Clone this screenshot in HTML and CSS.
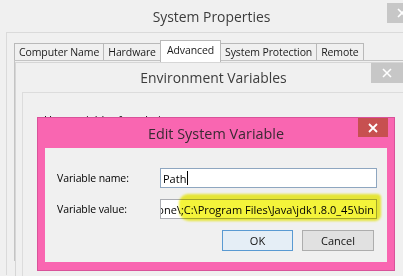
FILE: index.html
```html
<!DOCTYPE html>
<html lang="en">
<head>
  <meta charset="UTF-8" />
  <title>Edit System Variable</title>
  <link rel="stylesheet" href="styles.css">
</head>
<body>
  <div class="janela sistema">
    <div class="barra">
      <div class="titulo">System Properties</div>
      <div class="fechar cinza sys-fechar">
        <svg width="10" height="10" viewBox="0 0 10 10"><path d="M1 1L9 9M9 1L1 9" stroke="#fff" stroke-width="1.6"/></svg>
      </div>
    </div>
    <div class="cliente">
      <div class="abas">
        <div class="aba">Computer Name</div>
        <div class="aba">Hardware</div>
        <div class="aba ativa">Advanced</div>
        <div class="aba">System Protection</div>
        <div class="aba">Remote</div>
      </div>
      <div class="painel"></div>
    </div>
  </div>

  <div class="janela ambiente">
    <div class="barra">
      <div class="titulo">Environment Variables</div>
      <div class="fechar cinza">
        <svg width="10" height="10" viewBox="0 0 10 10"><path d="M1 1L9 9M9 1L1 9" stroke="#fff" stroke-width="1.6"/></svg>
      </div>
    </div>
    <div class="cliente">
      <div class="rotulo-grupo">User variables for admin</div>
    </div>
  </div>

  <div class="janela editar">
    <div class="barra">
      <div class="titulo">Edit System Variable</div>
      <div class="fechar vermelho">
        <svg width="10" height="10" viewBox="0 0 10 10"><path d="M1 1L9 9M9 1L1 9" stroke="#fff" stroke-width="1.8"/></svg>
      </div>
    </div>
    <div class="cliente">
      <div class="linha">
        <label>Variable name:</label>
        <div class="campo foco"><span>Path</span><i class="cursor"></i></div>
      </div>
      <div class="linha">
        <label>Variable value:</label>
        <div class="campo"><span>one\;C:\Program Files\Java\jdk1.8.0_45\bin</span></div>
      </div>
      <div class="botoes">
        <button class="btn padrao">OK</button>
        <button class="btn">Cancel</button>
      </div>
    </div>
    <div class="marca"></div>
  </div>
</body>
</html>
```

FILE: styles.css
```css
body {
  margin: 0;
  width: 403px;
  height: 276px;
  overflow: hidden;
  background-color: #f0f0f0;
  font-family: "Open Sans", "Noto Sans", sans-serif;
  font-size: 10.5px;
  letter-spacing: -0.1px;
  color: #000;
  position: relative;
}

.janela .barra {
  position: relative;
  display: flex;
  align-items: center;
  justify-content: center;
}

.fechar {
  position: absolute;
  display: flex;
  align-items: center;
  justify-content: center;
}

.cinza {
  background-color: #c7c7c7;
}

.vermelho {
  background-color: #c75050;
}

/* janela de tras */
.sistema .barra {
  height: 32px;
  padding-left: 20px;
}

.sistema .titulo {
  font-size: 13.9px;
  letter-spacing: 0;
  color: #3c3c3c;
}

.sys-fechar {
  top: 3px;
  right: -13px;
  width: 29px;
  height: 20px;
}

.sistema .cliente {
  margin-left: 6px;
  height: 242px;
  border-top: 1px solid #dadada;
  border-left: 1px solid #dadada;
  padding-left: 7px;
}

.abas {
  display: flex;
  margin-top: 10px;
  height: 17px;
}

.aba {
  padding: 0 4px;
  border: 1px solid #b9b9b9;
  border-bottom: none;
  border-right: none;
  line-height: 16px;
  background-color: #f0f0f0;
  color: #1a1a1a;
}

.aba:last-child {
  border-right: 1px solid #b9b9b9;
}

.aba.ativa {
  background-color: #fff;
  margin-top: -3px;
  height: 22px;
  line-height: 19px;
  padding: 0 6px;
  border-right: 1px solid #b9b9b9;
}

.aba.ativa + .aba {
  border-left: none;
}

.painel {
  height: 200px;
  border-top: 1px solid #c4c4c4;
  border-left: 1px solid #c4c4c4;
}

/* environment variables */
.ambiente {
  position: absolute;
  left: 15px;
  top: 62px;
  right: 0;
  bottom: 0;
  background-color: #f0f0f0;
  border-left: 1px solid #d6d6d6;
  border-top: 1px solid #d6d6d6;
}

.ambiente .barra {
  height: 29px;
  padding-left: 8px;
}

.ambiente .titulo {
  font-size: 13.9px;
  letter-spacing: 0;
  color: #3c3c3c;
}

.ambiente .fechar {
  top: 0;
  right: 0;
  width: 32px;
  height: 20px;
}

.ambiente .cliente {
  margin-left: 6px;
  height: 164px;
  border-top: 1px solid #dcdcdc;
  border-left: 1px solid #dcdcdc;
  padding: 19px 0 0 21px;
}

.rotulo-grupo {
  line-height: 16px;
  font-size: 11px;
}

/* edit system variable */
.editar {
  position: absolute;
  left: 37px;
  top: 117px;
  width: 358px;
  height: 154px;
  box-sizing: border-box;
  background-color: #f966b1;
  border: 1px solid #d9529a;
  padding: 0 7px 8px 7px;
}

.editar .barra {
  height: 30px;
}

.editar .titulo {
  font-size: 14.4px;
  letter-spacing: 0;
  color: #3a2a33;
  margin-top: 1px;
}

.editar .fechar {
  top: 0;
  right: -1px;
  width: 30px;
  height: 19px;
}

.editar .cliente {
  height: 114px;
  background-color: #f0f0f0;
  padding: 20px 10px 0 12px;
  box-sizing: border-box;
}

.linha {
  display: flex;
  align-items: center;
  margin-bottom: 11px;
}

.linha label {
  width: 103px;
  flex-shrink: 0;
}

.campo {
  width: 217px;
  height: 20px;
  box-sizing: border-box;
  border: 1px solid #abadb3;
  background-color: #fff;
  display: flex;
  align-items: center;
  justify-content: flex-end;
  overflow: hidden;
  white-space: nowrap;
  padding: 0 2px;
  font-size: 11px;
  letter-spacing: 0;
}

.campo.foco {
  border-color: #8ea6c0;
  justify-content: flex-start;
}

.cursor {
  display: inline-block;
  width: 1px;
  height: 14px;
  background-color: #000;
  margin-left: 1px;
}

.botoes {
  display: flex;
  justify-content: flex-end;
  gap: 9px;
  padding-right: 3px;
}

.btn {
  width: 72px;
  height: 21px;
  font-family: inherit;
  font-size: 11px;
  color: #111;
  background-color: #e1e1e1;
  border: 1px solid #adadad;
  padding: 0;
}

.btn.padrao {
  width: 71px;
  background-color: #e5eef6;
  border-color: #5a9ad2;
}

/* marca-texto amarelo por cima */
.marca {
  position: absolute;
  left: 141px;
  top: 76px;
  width: 202px;
  height: 27px;
  background-color: #f4f43a;
  mix-blend-mode: multiply;
  border-radius: 9px 4px 6px 10px;
  filter: blur(1px);
}
```
